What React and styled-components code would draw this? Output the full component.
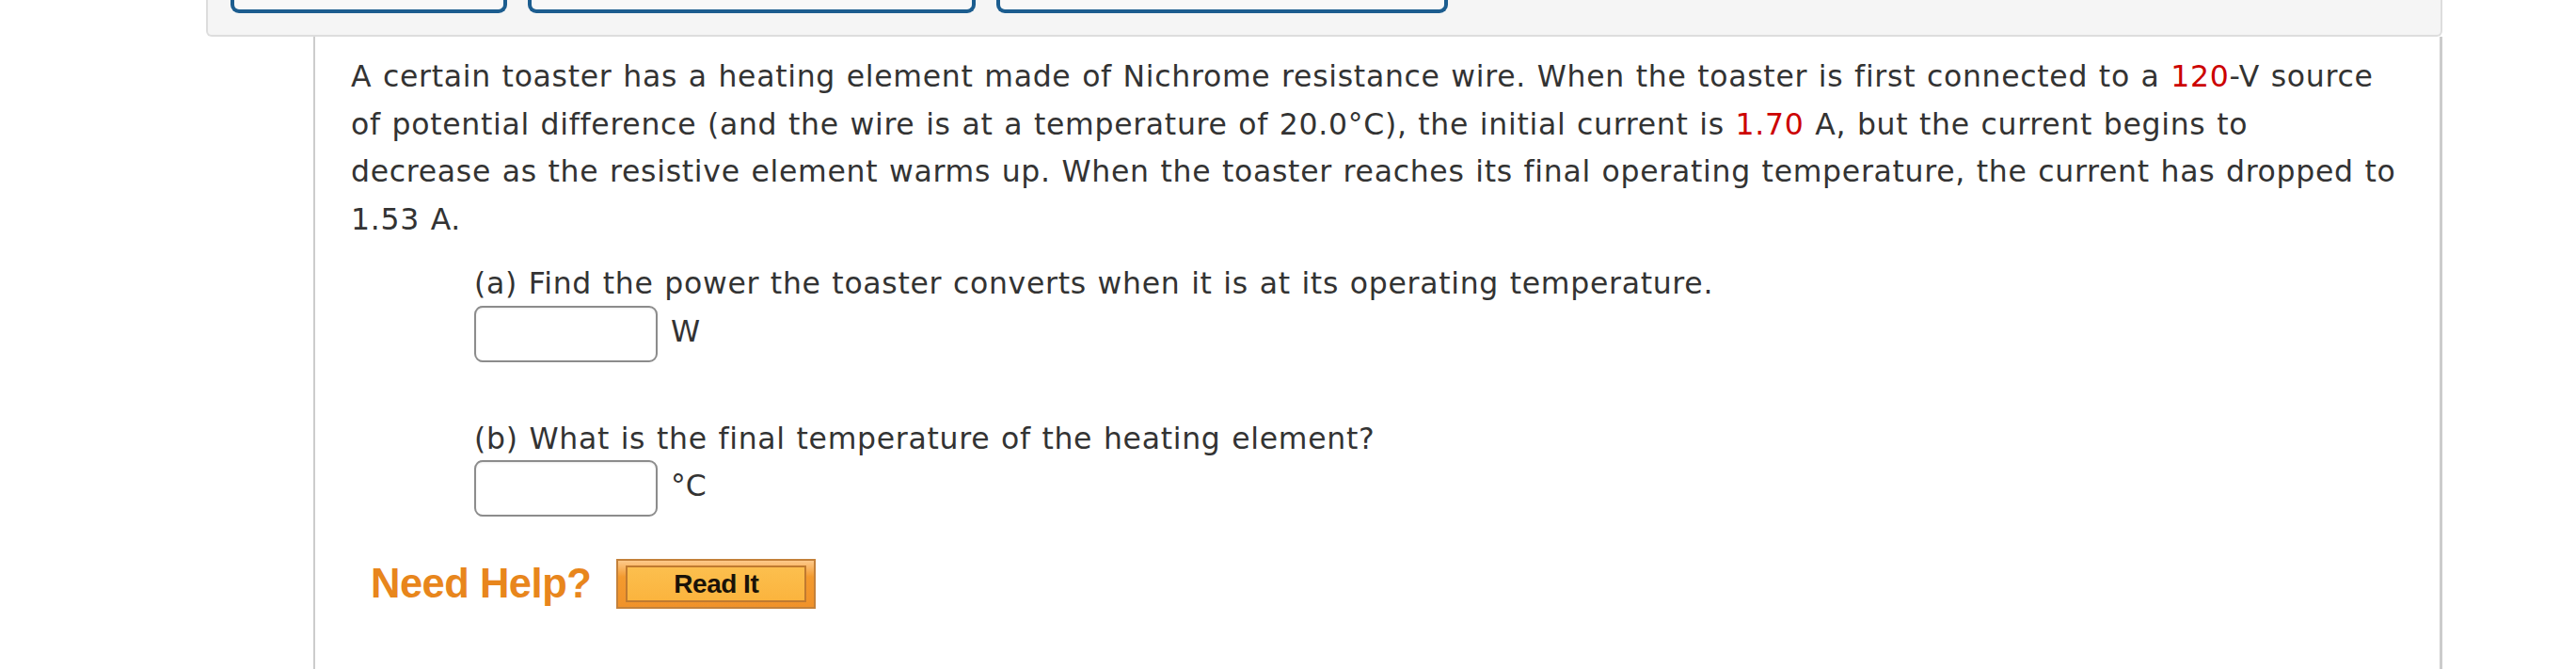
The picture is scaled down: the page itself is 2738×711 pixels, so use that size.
import React from "react";
import styled, { createGlobalStyle } from "styled-components";

const GlobalStyle = createGlobalStyle`
  html, body {
    margin: 0;
    padding: 0;
    background: #ffffff;
  }
  body {
    font-family: "DejaVu Sans", Verdana, sans-serif;
    color: #333333;
  }
`;

const Page = styled.div`
  margin-left: 219px;
  width: 2377px;
  height: 711px;
  overflow: hidden;
`;

const TopBar = styled.div`
  box-sizing: border-box;
  height: 39px;
  background: #f5f5f5;
  border: 2px solid #dddddd;
  border-top: none;
  border-radius: 0 0 6px 6px;
  display: flex;
  gap: 22px;
  padding-left: 24px;
`;

const Tab = styled.div`
  box-sizing: border-box;
  width: ${(p) => p.w}px;
  height: 14px;
  background: #f8f8f8;
  border: 4px solid #1c5d8f;
  border-top: none;
  border-radius: 0 0 9px 9px;
`;

const Panel = styled.div`
  box-sizing: border-box;
  margin-left: 114px;
  width: 2263px;
  min-height: 672px;
  border-left: 2px solid #cccccc;
  border-right: 3px solid #cccccc;
  padding: 17px 16px 0 38px;
`;

const Question = styled.p`
  margin: 0;
  font-size: 31.5px;
  line-height: 50.5px;
  letter-spacing: 0.7px;
  word-spacing: 1px;
`;

const Red = styled.span`
  color: #cc0000;
`;

const Part = styled.div`
  margin-left: 131px;
  margin-top: ${(p) => p.top}px;
`;

const PartText = styled.div`
  font-size: 31.5px;
  line-height: 50.5px;
  letter-spacing: 0.7px;
  word-spacing: 1px;
`;

const AnswerRow = styled.div`
  display: flex;
  align-items: flex-start;
  gap: 14px;
  margin-top: -2px;
`;

const AnswerBox = styled.input`
  box-sizing: border-box;
  width: 195px;
  height: 60px;
  margin: 0;
  border: 2.5px solid #8c8c8c;
  border-radius: 9px;
  background: #ffffff;
  box-shadow: inset 0 1px 2px rgba(0, 0, 0, 0.08);
  outline: none;
`;

const Unit = styled.span`
  font-size: 31.5px;
  line-height: 50.5px;
  padding-top: 2px;
`;

const HelpRow = styled.div`
  display: flex;
  align-items: center;
  gap: 27px;
  margin-top: 45px;
  margin-left: 21px;
`;

const HelpLabel = styled.span`
  font-family: "Liberation Sans", Arial, sans-serif;
  font-weight: bold;
  font-size: 43.5px;
  color: #e8861c;
  letter-spacing: -0.5px;
`;

const ReadButton = styled.button`
  box-sizing: border-box;
  width: 212px;
  height: 53px;
  padding: 5px 8px;
  border: 2px solid #c4813a;
  background: linear-gradient(#fdc98a, #f39a2e 35%, #f0922a);
  cursor: pointer;
  display: flex;
`;

const ReadInner = styled.span`
  box-sizing: border-box;
  flex: 1;
  border: 2px solid #c07a30;
  background: linear-gradient(#fcbf4e, #fbb43e);
  display: flex;
  align-items: center;
  justify-content: center;
  font-family: "Liberation Sans", Arial, sans-serif;
  font-weight: bold;
  font-size: 28px;
  color: #1a1208;
  letter-spacing: -0.5px;
`;

export default function App() {
  return (
    <>
      <GlobalStyle />
      <Page>
        <TopBar>
          <Tab w={294} />
          <Tab w={476} />
          <Tab w={480} />
        </TopBar>
        <Panel>
          <Question>
            A certain toaster has a heating element made of Nichrome resistance
            wire. When the toaster is first connected to a <Red>120</Red>-V
            source
            <br />
            of potential difference (and the wire is at a temperature of
            20.0°C), the initial current is <Red>1.70</Red> A, but the current
            begins to
            <br />
            decrease as the resistive element warms up. When the toaster
            reaches its final operating temperature, the current has dropped to
            <br />
            1.53 A.
          </Question>
          <Part top={18}>
            <PartText>
              (a) Find the power the toaster converts when it is at its
              operating temperature.
            </PartText>
            <AnswerRow>
              <AnswerBox type="text" />
              <Unit>W</Unit>
            </AnswerRow>
          </Part>
          <Part top={56}>
            <PartText>
              (b) What is the final temperature of the heating element?
            </PartText>
            <AnswerRow>
              <AnswerBox type="text" />
              <Unit>°C</Unit>
            </AnswerRow>
          </Part>
          <HelpRow>
            <HelpLabel>Need Help?</HelpLabel>
            <ReadButton type="button">
              <ReadInner>Read It</ReadInner>
            </ReadButton>
          </HelpRow>
        </Panel>
      </Page>
    </>
  );
}
